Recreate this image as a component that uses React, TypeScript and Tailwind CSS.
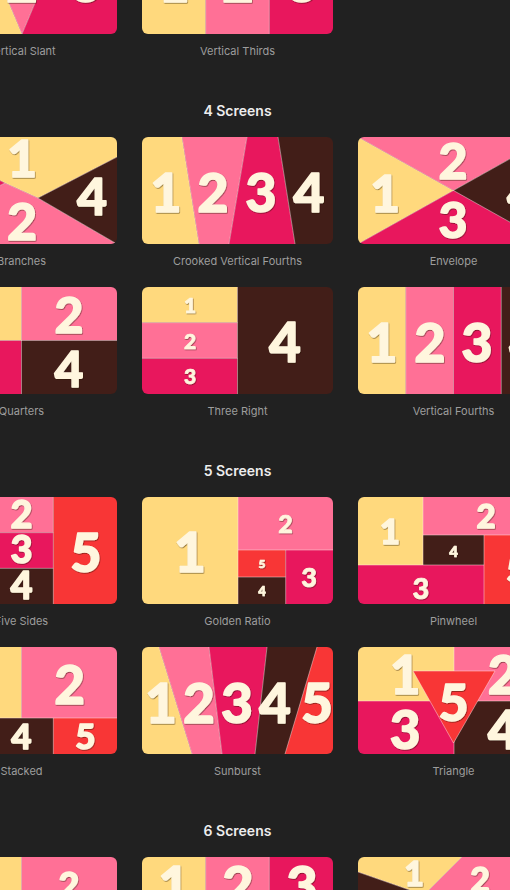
import React from 'react';

const Y = '#FFD97D';
const P = '#FF7096';
const C = '#E8175D';
const B = '#421E18';
const R = '#F83636';

const poly = (pts: number[], fill: string) => <polygon points={pts.join(' ')} fill={fill} />;
const box = (x: number, y: number, w: number, h: number, fill: string) => (
  <rect x={x} y={y} width={w} height={h} fill={fill} />
);
const ln = (x1: number, y1: number, x2: number, y2: number) => (
  <line x1={x1} y1={y1} x2={x2} y2={y2} stroke="#FFE6E6" strokeOpacity={0.6} strokeWidth={0.8} />
);
// numbers get a thin stroke of their own colour to reach the heavier weight of the reference
const num = (t: string, x: number, y: number, s: number) => (
  <text
    x={x}
    y={y}
    textAnchor="middle"
    fontSize={s}
    fontWeight={900}
    fontFamily="Lato, 'Noto Sans', sans-serif"
    fill="#FFF6DE"
    stroke="#FFF6DE"
    strokeWidth={s > 30 ? 1.4 : 0.7}
    strokeLinejoin="round"
    filter="url(#numShadow)"
  >
    {t}
  </text>
);

type Card = { name: string; draw: () => React.ReactNode } | null;

const W3 = 191 / 3;

const SECTIONS: { title: string | null; cards: Card[] }[] = [
  {
    title: null,
    cards: [
      {
        name: 'Vertical Slant',
        draw: () => (
          <>
            {poly([0, 0, 51, 0, 96, 107, 0, 107], Y)}
            {poly([51, 0, 141, 0, 96, 107], P)}
            {poly([141, 0, 191, 0, 191, 107, 96, 107], C)}
            {ln(51, 0, 96, 107)}
            {ln(141, 0, 96, 107)}
            {num('1', 26, 75, 54)}
            {num('2', 96, 75, 54)}
            {num('3', 160, 75, 54)}
          </>
        ),
      },
      {
        name: 'Vertical Thirds',
        draw: () => (
          <>
            {box(0, 0, W3, 107, Y)}
            {box(W3, 0, W3, 107, P)}
            {box(W3 * 2, 0, W3, 107, C)}
            {ln(W3, 0, W3, 107)}
            {ln(W3 * 2, 0, W3 * 2, 107)}
            {num('1', 32, 75, 54)}
            {num('2', 96, 75, 54)}
            {num('3', 160, 75, 54)}
          </>
        ),
      },
      null,
    ],
  },
  {
    title: '4 Screens',
    cards: [
      {
        name: 'Branches',
        draw: () => (
          <>
            {poly([0, 0, 191, 0, 191, 20, 112, 61, 79, 46, 0, 7], Y)}
            {poly([0, 7, 79, 46, 0, 85], C)}
            {poly([0, 85, 79, 46, 112, 61, 191, 107, 0, 107], P)}
            {poly([191, 20, 112, 61, 191, 107], B)}
            {ln(0, 7, 79, 46)}
            {ln(0, 85, 79, 46)}
            {ln(79, 46, 112, 61)}
            {ln(112, 61, 191, 20)}
            {ln(112, 61, 191, 107)}
            {num('1', 96, 40, 52)}
            {num('2', 96, 103, 52)}
            {num('3', 30, 60, 40)}
            {num('4', 166, 78, 52)}
          </>
        ),
      },
      {
        name: 'Crooked Vertical Fourths',
        draw: () => (
          <>
            {poly([0, 0, 40, 0, 57, 107, 0, 107], Y)}
            {poly([40, 0, 105, 0, 87, 107, 57, 107], P)}
            {poly([105, 0, 136, 0, 153, 107, 87, 107], C)}
            {poly([136, 0, 191, 0, 191, 107, 153, 107], B)}
            {ln(40, 0, 57, 107)}
            {ln(105, 0, 87, 107)}
            {ln(136, 0, 153, 107)}
            {num('1', 24, 75, 54)}
            {num('2', 71, 75, 54)}
            {num('3', 119, 75, 54)}
            {num('4', 167, 75, 54)}
          </>
        ),
      },
      {
        name: 'Envelope',
        draw: () => (
          <>
            {poly([0, 0, 95.5, 53.5, 0, 107], Y)}
            {poly([0, 0, 191, 0, 95.5, 53.5], P)}
            {poly([191, 0, 191, 107, 95.5, 53.5], B)}
            {poly([0, 107, 95.5, 53.5, 191, 107], C)}
            {ln(0, 0, 191, 107)}
            {ln(191, 0, 0, 107)}
            {num('1', 27, 75, 52)}
            {num('2', 95, 42, 50)}
            {num('3', 95, 101, 50)}
            {num('4', 164, 75, 52)}
          </>
        ),
      },
      {
        name: 'Quarters',
        draw: () => (
          <>
            {box(0, 0, 95.5, 53.5, Y)}
            {box(95.5, 0, 95.5, 53.5, P)}
            {box(0, 53.5, 95.5, 53.5, C)}
            {box(95.5, 53.5, 95.5, 53.5, B)}
            {ln(95.5, 0, 95.5, 107)}
            {ln(0, 53.5, 191, 53.5)}
            {num('1', 48, 46, 50)}
            {num('2', 143, 46, 50)}
            {num('3', 48, 100, 50)}
            {num('4', 143, 100, 50)}
          </>
        ),
      },
      {
        name: 'Three Right',
        draw: () => (
          <>
            {box(0, 0, 95.5, 35.67, Y)}
            {box(0, 35.67, 95.5, 35.67, P)}
            {box(0, 71.33, 95.5, 35.67, C)}
            {box(95.5, 0, 95.5, 107, B)}
            {ln(95.5, 0, 95.5, 107)}
            {ln(0, 35.67, 95.5, 35.67)}
            {ln(0, 71.33, 95.5, 71.33)}
            {num('1', 48, 26, 21)}
            {num('2', 48, 62, 21)}
            {num('3', 48, 97, 21)}
            {num('4', 143, 75, 55)}
          </>
        ),
      },
      {
        name: 'Vertical Fourths',
        draw: () => (
          <>
            {box(0, 0, 47.75, 107, Y)}
            {box(47.75, 0, 47.75, 107, P)}
            {box(95.5, 0, 47.75, 107, C)}
            {box(143.25, 0, 47.75, 107, B)}
            {ln(47.75, 0, 47.75, 107)}
            {ln(95.5, 0, 95.5, 107)}
            {ln(143.25, 0, 143.25, 107)}
            {num('1', 24, 75, 54)}
            {num('2', 72, 75, 54)}
            {num('3', 119, 75, 54)}
            {num('4', 167, 75, 54)}
          </>
        ),
      },
    ],
  },
  {
    title: '5 Screens',
    cards: [
      {
        name: 'Five Sides',
        draw: () => (
          <>
            {box(0, 0, W3, 107, Y)}
            {box(W3, 0, W3, 35.67, P)}
            {box(W3, 35.67, W3, 35.67, C)}
            {box(W3, 71.33, W3, 35.67, B)}
            {box(W3 * 2, 0, W3, 107, R)}
            {ln(W3, 0, W3, 107)}
            {ln(W3 * 2, 0, W3 * 2, 107)}
            {ln(W3, 35.67, W3 * 2, 35.67)}
            {ln(W3, 71.33, W3 * 2, 71.33)}
            {num('1', 32, 75, 54)}
            {num('2', 95.5, 31, 38)}
            {num('3', 95.5, 66, 38)}
            {num('4', 95.5, 102, 38)}
            {num('5', 160, 75, 54)}
          </>
        ),
      },
      {
        name: 'Golden Ratio',
        draw: () => (
          <>
            {box(0, 0, 96, 107, Y)}
            {box(96, 0, 95, 53, P)}
            {box(96, 53, 47.7, 27, R)}
            {box(96, 80, 47.7, 27, B)}
            {box(143.7, 53, 47.3, 54, C)}
            {ln(96, 0, 96, 107)}
            {ln(96, 53, 191, 53)}
            {ln(143.7, 53, 143.7, 107)}
            {ln(96, 80, 143.7, 80)}
            {num('1', 48, 75, 55)}
            {num('2', 143.5, 36, 25)}
            {num('5', 120, 71, 12)}
            {num('4', 120, 99, 13)}
            {num('3', 167, 90, 27)}
          </>
        ),
      },
      {
        name: 'Pinwheel',
        draw: () => (
          <>
            {box(0, 0, 65, 68, Y)}
            {box(65, 0, 126, 38, P)}
            {box(65, 38, 61, 30, B)}
            {box(126, 38, 65, 69, R)}
            {box(0, 68, 126, 39, C)}
            {ln(65, 0, 65, 68)}
            {ln(65, 38, 191, 38)}
            {ln(126, 38, 126, 107)}
            {ln(0, 68, 126, 68)}
            {num('1', 32, 47, 35)}
            {num('2', 128, 31, 33)}
            {num('4', 95.5, 60, 15)}
            {num('3', 63, 102, 29)}
            {num('5', 158, 85, 34)}
          </>
        ),
      },
      {
        name: 'Stacked',
        draw: () => (
          <>
            {box(0, 0, 95.5, 71, Y)}
            {box(95.5, 0, 95.5, 71, P)}
            {box(0, 71, W3, 36, C)}
            {box(W3, 71, W3, 36, B)}
            {box(W3 * 2, 71, W3, 36, R)}
            {ln(95.5, 0, 95.5, 71)}
            {ln(0, 71, 191, 71)}
            {ln(W3, 71, W3, 107)}
            {ln(W3 * 2, 71, W3 * 2, 107)}
            {num('1', 48, 57, 53)}
            {num('2', 143.5, 57, 53)}
            {num('3', 32, 102, 35)}
            {num('4', 95.5, 102, 35)}
            {num('5', 159.5, 102, 35)}
          </>
        ),
      },
      {
        name: 'Sunburst',
        draw: () => (
          <>
            {poly([0, 0, 17, 0, 50, 107, 0, 107], Y)}
            {poly([17, 0, 67, 0, 80, 107, 50, 107], P)}
            {poly([67, 0, 125, 0, 113, 107, 80, 107], C)}
            {poly([125, 0, 175, 0, 143, 107, 113, 107], B)}
            {poly([175, 0, 191, 0, 191, 107, 143, 107], R)}
            {ln(17, 0, 50, 107)}
            {ln(67, 0, 80, 107)}
            {ln(125, 0, 113, 107)}
            {ln(175, 0, 143, 107)}
            {num('1', 19, 76, 55)}
            {num('2', 57, 76, 55)}
            {num('3', 95, 76, 55)}
            {num('4', 133, 76, 55)}
            {num('5', 175, 76, 55)}
          </>
        ),
      },
      {
        name: 'Triangle',
        draw: () => (
          <>
            {box(0, 0, 96, 54, Y)}
            {box(96, 0, 95, 54, P)}
            {box(0, 54, 96, 53, C)}
            {box(96, 54, 95, 53, B)}
            {ln(96, 0, 96, 107)}
            {ln(0, 54, 191, 54)}
            {num('1', 47, 47, 53)}
            {num('2', 145, 47, 53)}
            {num('3', 47, 102, 53)}
            {num('4', 145, 102, 53)}
            <polygon
              points="55,24 137,24 95.5,96"
              fill={R}
              stroke="#FFE6E6"
              strokeOpacity={0.6}
              strokeWidth={0.8}
            />
            {num('5', 95.5, 74, 52)}
          </>
        ),
      },
    ],
  },
  {
    title: '6 Screens',
    cards: [
      {
        name: 'Two Over Four',
        draw: () => (
          <>
            {box(0, 0, 95.5, 53.5, Y)}
            {box(95.5, 0, 95.5, 53.5, P)}
            {box(0, 53.5, 47.75, 53.5, C)}
            {box(47.75, 53.5, 47.75, 53.5, B)}
            {box(95.5, 53.5, 47.75, 53.5, R)}
            {box(143.25, 53.5, 47.75, 53.5, Y)}
            {ln(95.5, 0, 95.5, 107)}
            {ln(0, 53.5, 191, 53.5)}
            {ln(47.75, 53.5, 47.75, 107)}
            {ln(143.25, 53.5, 143.25, 107)}
            {num('1', 48, 41, 36)}
            {num('2', 143, 41, 36)}
            {num('3', 24, 92, 28)}
            {num('4', 72, 92, 28)}
            {num('5', 119, 92, 28)}
            {num('6', 167, 92, 28)}
          </>
        ),
      },
      {
        name: 'Sixths',
        draw: () => (
          <>
            {box(0, 0, W3, 53.5, Y)}
            {box(W3, 0, W3, 53.5, P)}
            {box(W3 * 2, 0, W3, 53.5, C)}
            {box(0, 53.5, W3, 53.5, B)}
            {box(W3, 53.5, W3, 53.5, R)}
            {box(W3 * 2, 53.5, W3, 53.5, Y)}
            {ln(W3, 0, W3, 107)}
            {ln(W3 * 2, 0, W3 * 2, 107)}
            {ln(0, 53.5, 191, 53.5)}
            {num('1', 32, 48, 54)}
            {num('2', 96, 48, 54)}
            {num('3', 160, 48, 54)}
            {num('4', 32, 101, 54)}
            {num('5', 96, 101, 54)}
            {num('6', 160, 101, 54)}
          </>
        ),
      },
      {
        name: 'Shards',
        draw: () => (
          <>
            {poly([0, 0, 104, 0, 66, 38, 0, 15], Y)}
            {poly([104, 0, 191, 0, 191, 45, 125, 69, 66, 38], P)}
            {poly([0, 15, 66, 38, 60, 107, 0, 107], B)}
            {poly([66, 38, 125, 69, 120, 107, 60, 107], C)}
            {poly([125, 69, 191, 45, 191, 107, 120, 107], R)}
            {ln(104, 0, 66, 38)}
            {ln(0, 15, 66, 38)}
            {ln(66, 38, 125, 69)}
            {ln(125, 69, 191, 45)}
            {ln(66, 38, 60, 107)}
            {ln(125, 69, 120, 107)}
            {num('1', 56, 29, 34)}
            {num('2', 122, 35, 34)}
            {num('6', 24, 62, 34)}
            {num('3', 92, 92, 30)}
            {num('4', 158, 92, 30)}
          </>
        ),
      },
    ],
  },
];

const Thumb: React.FC<{ card: Card }> = ({ card }) => {
  if (!card) return <div />;
  return (
    <div className="flex flex-col">
      <div className="h-[107px] rounded-[6px] overflow-hidden">
        <svg viewBox="0 0 191 107" width={191} height={107} className="block">
          {card.draw()}
        </svg>
      </div>
      <div className="mt-[10px] h-[14px] text-[11px] leading-[14px] text-center text-[#9d9d9d] font-['Inter','Liberation_Sans',sans-serif] whitespace-nowrap">
        {card.name}
      </div>
    </div>
  );
};

export default function App() {
  return (
    <div className="relative w-full min-h-[890px] h-[890px] overflow-hidden bg-[#212121]">
      <svg width={0} height={0} className="absolute">
        <defs>
          <filter id="numShadow" x="-20%" y="-20%" width="140%" height="140%">
            <feDropShadow dx={0.6} dy={0.8} stdDeviation={0.4} floodColor="#2a0a05" floodOpacity={0.55} />
          </filter>
        </defs>
      </svg>

      <div className="w-[623px] -ml-[74px] -mt-[73px] flex flex-col gap-[42px]">
        {SECTIONS.map((sec, i) => (
          <div key={i} className="flex flex-col">
            {sec.title && (
              <div className="mt-[1px] h-[20px] leading-[20px] mb-[16px] text-[14px] font-semibold text-center text-[#EDEDED] font-['Inter','Liberation_Sans',sans-serif]">
                {sec.title}
              </div>
            )}
            <div className="grid grid-cols-[repeat(3,191px)] gap-x-[25px] gap-y-[19px]">
              {sec.cards.map((c, j) => (
                <Thumb key={j} card={c} />
              ))}
            </div>
          </div>
        ))}
      </div>
    </div>
  );
}
